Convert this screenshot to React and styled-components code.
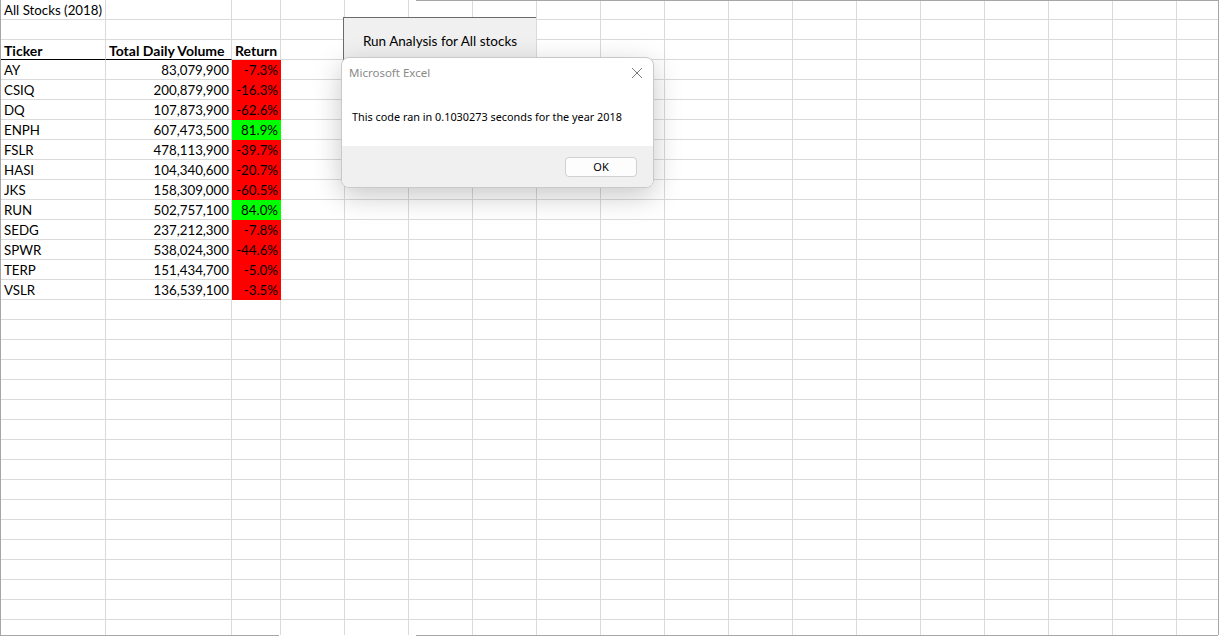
import React from "react";
import styled, { createGlobalStyle } from "styled-components";

const GlobalStyle = createGlobalStyle`
    html, body {
        margin: 0;
        padding: 0;
        background: #fff;
    }
    body {
        font-family: Lato, "Liberation Sans", sans-serif;
    }
`;

const COLS = [105, 126, 49, ...Array(16).fill(64)];
const ROW_COUNT = 32;

const rows = [
    ["AY", "83,079,900", "-7.3%", "red"],
    ["CSIQ", "200,879,900", "-16.3%", "red"],
    ["DQ", "107,873,900", "-62.6%", "red"],
    ["ENPH", "607,473,500", "81.9%", "green"],
    ["FSLR", "478,113,900", "-39.7%", "red"],
    ["HASI", "104,340,600", "-20.7%", "red"],
    ["JKS", "158,309,000", "-60.5%", "red"],
    ["RUN", "502,757,100", "84.0%", "green"],
    ["SEDG", "237,212,300", "-7.8%", "red"],
    ["SPWR", "538,024,300", "-44.6%", "red"],
    ["TERP", "151,434,700", "-5.0%", "red"],
    ["VSLR", "136,539,100", "-3.5%", "red"],
];

const fills = { red: "#ff0000", green: "#00ff00" };

const Page = styled.div`
    position: relative;
    width: 1219px;
    height: 636px;
    overflow: hidden;
`;

const Sheet = styled.div`
    display: grid;
    grid-template-columns: ${COLS.map((w) => w + "px").join(" ")};
    grid-auto-rows: 20px;
    width: 1217px;
    height: 635px;
    overflow: hidden;
    border-left: 1px solid #a6a6a6;
    border-right: 1px solid #a6a6a6;
`;

const Cell = styled.div`
    box-sizing: border-box;
    border-right: 1px solid ${(p) => p.$fill || "#dadada"};
    border-bottom: 1px solid
        ${(p) => (p.$line ? "#000" : p.$fill || "#dadada")};
    background: ${(p) => p.$fill || "transparent"};
    font-size: ${(p) => (p.$bold ? "14px" : "13.3px")};
    line-height: 21px;
    font-weight: ${(p) => (p.$bold ? 700 : 400)};
    color: #000;
    text-align: ${(p) => (p.$right ? "right" : "left")};
    padding: 0 ${(p) => (p.$right ? "2px" : "0")} 0
        ${(p) => (p.$right ? "0" : "3px")};
    white-space: nowrap;
    overflow: visible;
    position: relative;
    z-index: ${(p) => (p.$over ? 1 : 0)};
`;

const EdgeLine = styled.div`
    position: absolute;
    left: ${(p) => p.$from}px;
    right: 1px;
    height: 1px;
    background: #a6a6a6;
    ${(p) => (p.$top ? "top: 0;" : "bottom: 0;")}
`;

const BottomLeft = styled.div`
    position: absolute;
    left: 0;
    bottom: 0;
    width: 279px;
    height: 1px;
    background: #a6a6a6;
`;

const MacroButton = styled.div`
    position: absolute;
    left: 343px;
    top: 17px;
    width: 193px;
    height: 46px;
    box-sizing: border-box;
    background: #f0f0f0;
    border-top: 1px solid #6b6b6b;
    border-left: 1px solid #6b6b6b;
    display: flex;
    align-items: center;
    justify-content: center;
    font-size: 13.5px;
    color: #000;
`;

const Dialog = styled.div`
    position: absolute;
    left: 341px;
    top: 57px;
    width: 313px;
    height: 131px;
    box-sizing: border-box;
    background: #fff;
    border: 1px solid #c9c9c9;
    border-radius: 8px;
    box-shadow: 0 8px 28px rgba(0, 0, 0, 0.22);
    overflow: hidden;
    display: flex;
    flex-direction: column;
    font-family: "Noto Sans", "Open Sans", sans-serif;
`;

const TitleBar = styled.div`
    height: 29px;
    display: flex;
    align-items: center;
    justify-content: space-between;
    padding: 0 10px 0 7px;
    font-size: 11.5px;
    color: #8a8a8a;
`;

const Close = styled.svg`
    width: 12px;
    height: 12px;
`;

const Message = styled.div`
    flex: 1;
    display: flex;
    align-items: center;
    padding: 0 10px;
    font-size: 10.85px;
    color: #000;
`;

const Footer = styled.div`
    height: 41px;
    background: #f0f0f0;
    display: flex;
    align-items: center;
    justify-content: flex-end;
    padding-right: 16px;
`;

const OkButton = styled.div`
    width: 72px;
    height: 20px;
    box-sizing: border-box;
    background: #fdfdfd;
    border: 1px solid #d0d0d0;
    border-radius: 4px;
    display: flex;
    align-items: center;
    justify-content: center;
    font-size: 11px;
    color: #000;
`;

function cellFor(r, c) {
    if (r === 0 && c === 0) return { text: "All Stocks (2018)", over: true };
    if (r === 2) {
        if (c === 0) return { text: "Ticker", bold: true, line: true };
        if (c === 1)
            return { text: "Total Daily Volume", bold: true, line: true };
        if (c === 2) return { text: "Return", bold: true };
    }
    const d = rows[r - 3];
    if (d && c < 3) {
        if (c === 0) return { text: d[0] };
        if (c === 1) return { text: d[1], right: true };
        return { text: d[2], right: true, fill: fills[d[3]] };
    }
    return {};
}

export default function App() {
    const cells = [];
    for (let r = 0; r < ROW_COUNT; r++) {
        for (let c = 0; c < COLS.length; c++) {
            const x = cellFor(r, c);
            cells.push(
                <Cell
                    key={r + "-" + c}
                    $bold={x.bold}
                    $right={x.right}
                    $fill={x.fill}
                    $line={x.line}
                    $over={x.over}
                >
                    {x.text}
                </Cell>
            );
        }
    }
    return (
        <Page>
            <GlobalStyle />
            <Sheet>{cells}</Sheet>
            <EdgeLine $top $from={416} />
            <EdgeLine $from={416} />
            <BottomLeft />
            <MacroButton>Run Analysis for All stocks</MacroButton>
            <Dialog>
                <TitleBar>
                    <span>Microsoft Excel</span>
                    <Close viewBox="0 0 12 12">
                        <path
                            d="M1 1 L11 11 M11 1 L1 11"
                            stroke="#7a7a7a"
                            strokeWidth="1"
                            fill="none"
                        />
                    </Close>
                </TitleBar>
                <Message>
                    This code ran in 0.1030273 seconds for the year 2018
                </Message>
                <Footer>
                    <OkButton>OK</OkButton>
                </Footer>
            </Dialog>
        </Page>
    );
}
